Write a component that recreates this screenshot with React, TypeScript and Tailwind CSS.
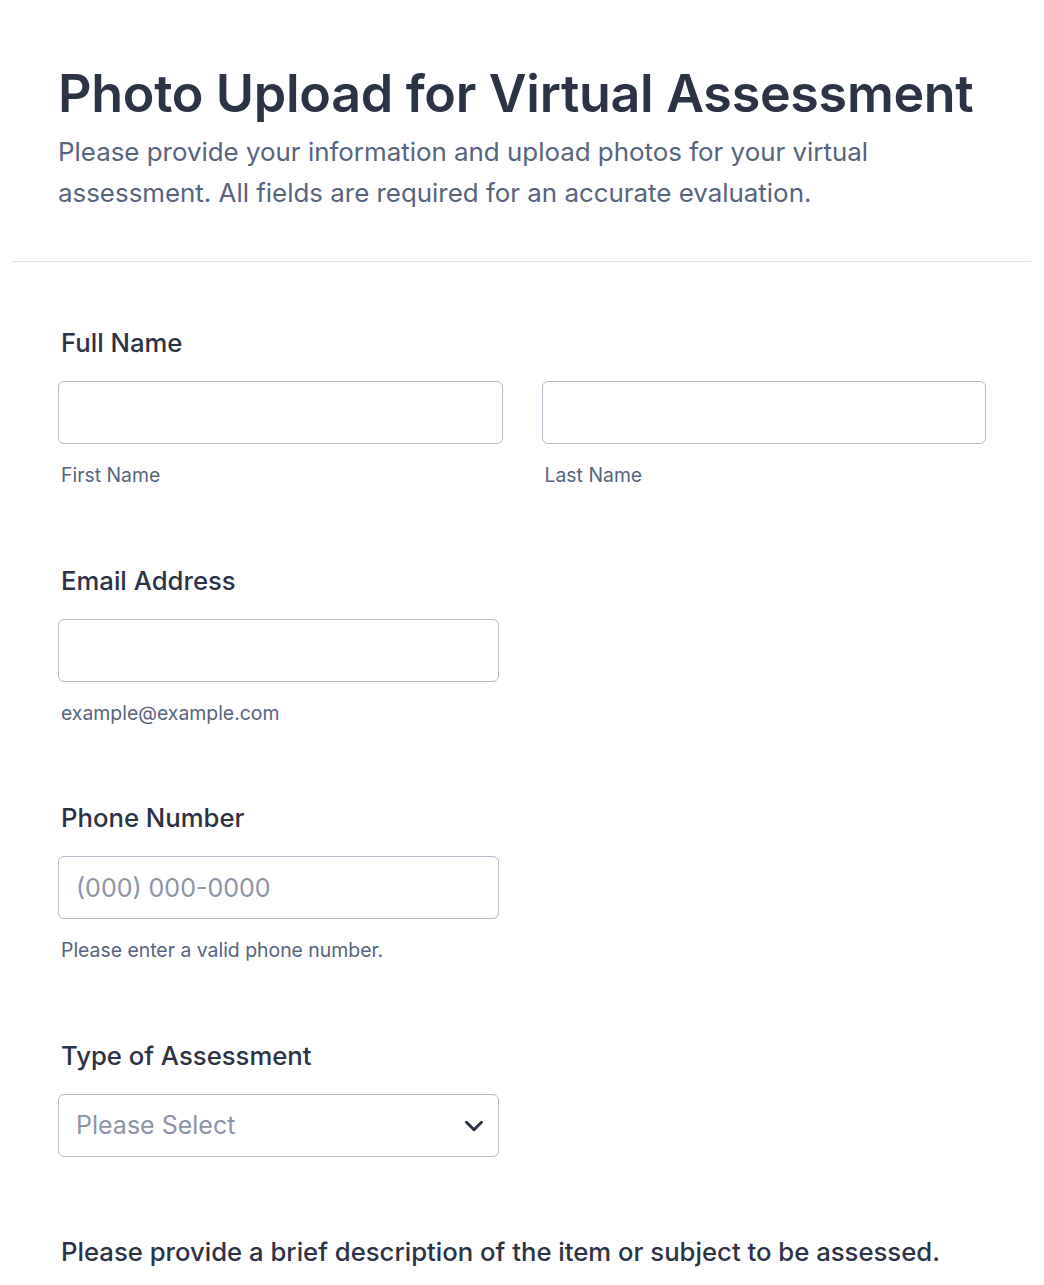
import { ChevronDown } from "lucide-react";

const inputClass =
  "h-[63px] w-full rounded-[6px] border border-[#b3b9c6] bg-white px-[17px] text-[25px] text-[#2c3345] placeholder:text-[#8c94a6] outline-none";

function Label({ children }: { children: React.ReactNode }) {
  return (
    <p className="pl-[3px] text-[25.7px] font-medium leading-[32px] text-[#2c3345]">
      {children}
    </p>
  );
}

function SubLabel({ children }: { children: React.ReactNode }) {
  return (
    <p className="mt-[18px] pl-[3px] text-[19.4px] leading-[26px] text-[#57647e]">
      {children}
    </p>
  );
}

export default function App() {
  return (
    <div
      className="min-h-[1285px] bg-white px-[13px]"
      style={{ fontFamily: "Inter, 'Noto Sans', sans-serif" }}
    >
      <header className="border-b border-[#dadee5] px-[45px] pb-[48px] pt-[62px]">
        <h1 className="text-[52px] font-semibold leading-[64px] tracking-[-0.3px] text-[#2c3345]">
          Photo Upload for Virtual Assessment
        </h1>
        <p className="mt-[5px] max-w-[900px] text-[25.9px] leading-[41px] text-[#57647e]">
          Please provide your information and upload photos for your virtual
          assessment. All fields are required for an accurate evaluation.
        </p>
      </header>

      <form className="px-[45px] pt-[65px]">
        <div>
          <Label>Full Name</Label>
          <div className="mt-[22px] grid grid-cols-2 gap-[39px]">
            <div>
              <input className={inputClass} />
              <SubLabel>First Name</SubLabel>
            </div>
            <div>
              <input className={inputClass} />
              <SubLabel>Last Name</SubLabel>
            </div>
          </div>
        </div>

        <div className="mt-[77px] w-[441px]">
          <Label>Email Address</Label>
          <input className={`${inputClass} mt-[22px]`} />
          <SubLabel>example@example.com</SubLabel>
        </div>

        <div className="mt-[76px] w-[441px]">
          <Label>Phone Number</Label>
          <input
            className={`${inputClass} mt-[22px]`}
            placeholder="(000) 000-0000"
          />
          <SubLabel>Please enter a valid phone number.</SubLabel>
        </div>

        <div className="mt-[77px] w-[441px]">
          <Label>Type of Assessment</Label>
          <div className="relative mt-[22px]">
            <div className={`${inputClass} flex items-center text-[#8c94a6]`}>
              Please Select
            </div>
            <ChevronDown
              className="absolute right-[10px] top-1/2 h-[30px] w-[30px] -translate-y-1/2 text-[#2c3345]"
              strokeWidth={2.4}
            />
          </div>
        </div>

        <div className="mt-[79px]">
          <Label>Please provide a brief description of the item or subject to be assessed.</Label>
        </div>
      </form>
    </div>
  );
}
